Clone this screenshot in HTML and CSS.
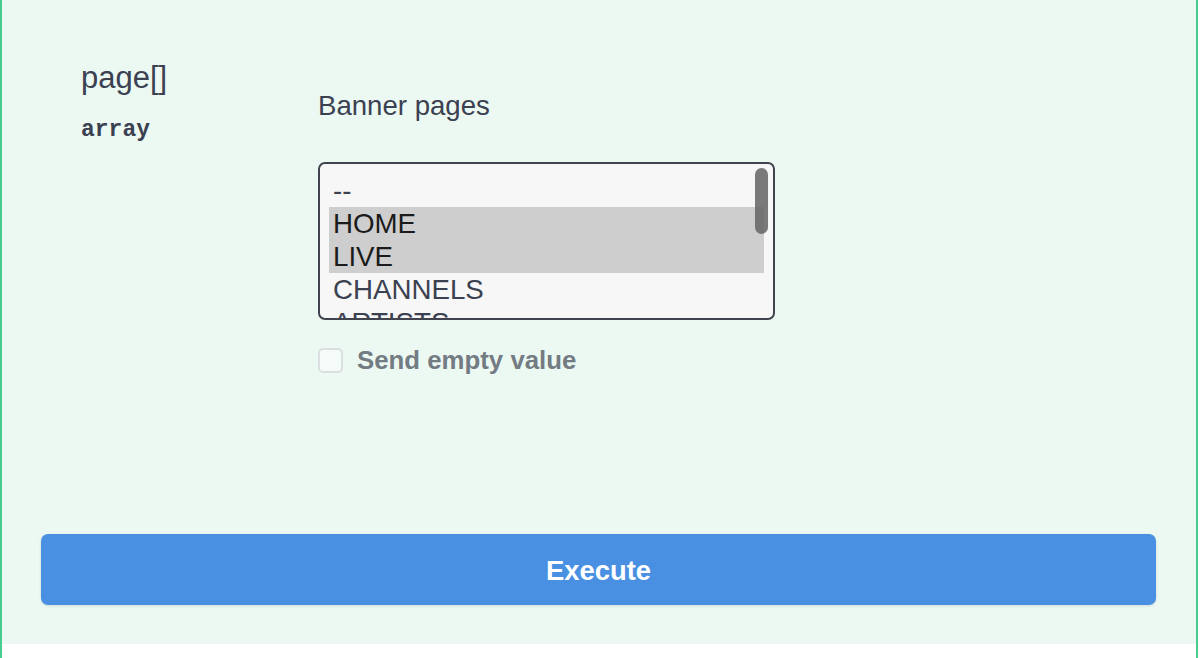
FILE: index.html
```html
<!DOCTYPE html>
<html lang="en">
<head>
  <meta charset="UTF-8">
  <meta name="viewport" content="width=device-width, initial-scale=1">
  <title>page[] - Try it out</title>
  <link rel="stylesheet" href="styles.css">
</head>
<body>

  <div class="opblock">
    <div class="parameters">
      <div class="param-row">
        <div class="param-name">
          <div class="name">page[]</div>
          <div class="type">array</div>
        </div>
        <div class="param-col">
          <div class="description">Banner pages</div>

          <div class="listbox">
            <div class="option">--</div>
            <div class="option selected">HOME</div>
            <div class="option selected">LIVE</div>
            <div class="option">CHANNELS</div>
            <div class="option">ARTISTS</div>
            <div class="option">EVENTS</div>
            <div class="thumb"></div>
          </div>

          <label class="empty-value">
            <span class="checkbox"></span>
            <span>Send empty value</span>
          </label>
        </div>
      </div>
    </div>

    <div class="execute-wrapper">
      <button class="btn-execute">Execute</button>
    </div>

    <div class="responses"></div>
  </div>

</body>
</html>
```

FILE: styles.css
```css
body {
  margin: 0;
  padding: 0;
  font-family: 'Liberation Sans', Arial, sans-serif;
  color: #3b4151;
  background: #fff;
}

.opblock {
  margin-right: 2px;
  border-left: 2px solid #49cc90;
  border-right: 2px solid #49cc90;
  height: 658px;
  display: flex;
  flex-direction: column;
}

.parameters {
  background: #ecf9f3;
  padding: 56px 0 0 79px;
  height: 478px;
}

.param-row {
  display: flex;
}

.param-name {
  width: 237px;
}

.param-name .name {
  font-size: 31px;
  line-height: 38px;
  padding-top: 3px;
}

.param-name .type {
  font-family: 'Liberation Mono', 'Courier New', monospace;
  font-weight: bold;
  font-size: 23px;
  margin-top: 20px;
}

.param-col {
  display: flex;
  flex-direction: column;
  align-items: flex-start;
}

.description {
  font-size: 27.6px;
  margin-top: 33px;
  line-height: 34px;
}

.listbox {
  position: relative;
  margin-top: 39px;
  width: 457px;
  height: 158px;
  box-sizing: border-box;
  border: 2px solid #41444e;
  border-radius: 7px;
  background: #f7f7f7;
  padding: 10px 9px 0;
  overflow: hidden;
  font-size: 27.7px;
}

.option {
  line-height: 33px;
  padding-left: 4px;
  color: #3b4151;
}

.option.selected {
  background: #cecece;
  color: #1b1b1b;
}

.thumb {
  position: absolute;
  top: 4px;
  right: 5px;
  width: 13px;
  height: 66px;
  border-radius: 7px;
  background: rgba(100, 100, 100, 0.85);
}

.empty-value {
  display: flex;
  align-items: center;
  margin-top: 25px;
  font-weight: bold;
  font-size: 25.8px;
  line-height: 30px;
  color: #737b83;
}

.checkbox {
  width: 21px;
  height: 21px;
  border: 2px solid #dcdfdf;
  border-radius: 5px;
  background: #f4fbf8;
  margin-right: 14px;
}

.execute-wrapper {
  background: #ecf9f3;
  padding: 0 40px 39px 39px;
}

.btn-execute {
  display: block;
  width: 100%;
  height: 71px;
  padding: 3px 0 0;
  border: none;
  border-radius: 7px;
  background: #4990e2;
  color: #fff;
  font-family: 'Liberation Sans', Arial, sans-serif;
  font-weight: bold;
  font-size: 27.4px;
  box-shadow: 0 1px 3px rgba(0, 0, 0, 0.12);
  cursor: pointer;
}

.responses {
  flex: 1;
  background: #fff;
}
```
